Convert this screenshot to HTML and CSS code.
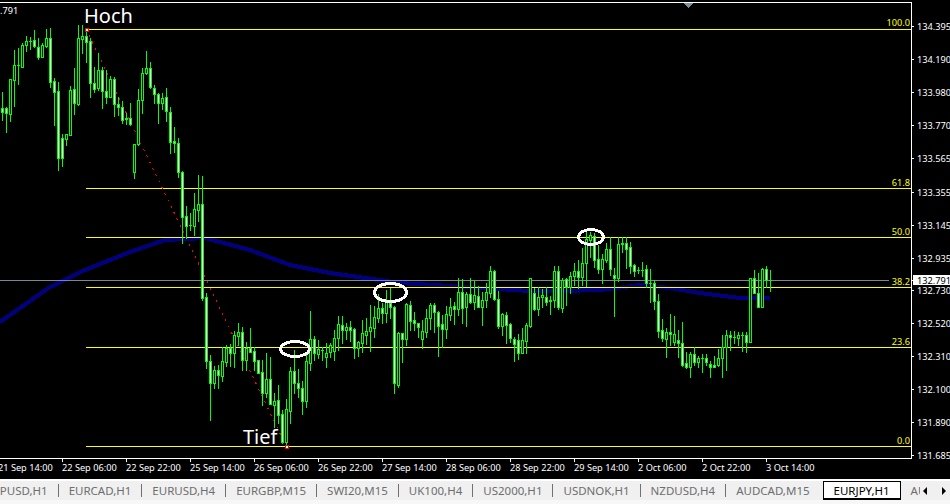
FILE: index.html
```html
<!DOCTYPE html>
<html lang="de">
<head>
<meta charset="utf-8">
<title>EURJPY,H1</title>
<link rel="stylesheet" href="styles.css">
</head>
<body>
<main class="terminal">
  <svg class="chart" viewBox="0 0 950 479" width="950" height="479" aria-label="EURJPY H1 chart">
    <g id="ma"></g>
    <g class="fib-lines">
      <rect x="86" y="29" width="825" height="1"/>
      <rect x="86" y="188" width="825" height="1"/>
      <rect x="86" y="237" width="825" height="1"/>
      <rect x="86" y="287" width="825" height="1"/>
      <rect x="86" y="347" width="825" height="1"/>
      <rect x="86" y="446" width="825" height="1"/>
    </g>
    <rect class="price-line" x="0" y="280" width="911" height="1"/>
    <line class="trend" x1="86" y1="29" x2="286" y2="446"/>
    <g id="candles"></g>
    <g class="anchors">
      <rect x="85" y="28" width="3" height="3"/>
      <rect x="285" y="445" width="3" height="3"/>
    </g>
    <g class="marks">
      <ellipse cx="295" cy="349" rx="14.5" ry="7.5"/>
      <ellipse cx="390.5" cy="292.5" rx="16" ry="9"/>
      <ellipse cx="591" cy="237" rx="12.5" ry="7.5"/>
    </g>
    <g class="frame">
      <rect x="0" y="2" width="912" height="1"/>
      <rect x="0" y="458" width="912" height="1"/>
      <rect x="911" y="2" width="1" height="457"/>
    </g>
    <polygon class="shift" points="684,3 693,3 688.5,8"/>
    <g id="ticks" class="frame"></g>

    <rect class="fib-mask" x="889" y="277" width="22" height="9"/>
    <g class="fib-text">
      <text x="910" y="26">100.0</text>
      <text x="910" y="186">61.8</text>
      <text x="910" y="235">50.0</text>
      <text x="910" y="285">38.2</text>
      <text x="910" y="345">23.6</text>
      <text x="910" y="444">0.0</text>
    </g>

    <text class="axis" x="0" y="14">.791</text>
    <text class="note" x="84" y="23">Hoch</text>
    <text class="note" x="243" y="444">Tief</text>

    <g class="axis" id="prices"></g>
    <rect class="price-box" x="913" y="275" width="37" height="10"/>
    <text class="axis axis-current" x="917" y="284">132.791</text>
    <g class="axis" id="times"></g>
  </svg>

  <nav class="tabbar">
    <div class="tabs">
      <span class="tab tab-first">GBPUSD,H1</span>
      <span class="tab">EURCAD,H1</span>
      <span class="tab">EURUSD,H4</span>
      <span class="tab">EURGBP,M15</span>
      <span class="tab">SWI20,M15</span>
      <span class="tab">UK100,H4</span>
      <span class="tab">US2000,H1</span>
      <span class="tab">USDNOK,H1</span>
      <span class="tab">NZDUSD,H4</span>
      <span class="tab tab-plain">AUDCAD,M15</span>
      <span class="tab tab-active">EURJPY,H1</span>
      <span class="tab tab-plain">AUDJPY,H1</span>
    </div>
    <div class="arrows">
      <svg width="30" height="12" viewBox="0 0 30 12"><path d="M7 2v8L3 6zM22 2v8l4-4z"/></svg>
    </div>
  </nav>
</main>
<script src="chart.js"></script>
</body>
</html>
```
FILE: styles.css
```css
html, body {
  margin: 0;
  padding: 0;
  background: #000;
}
.terminal {
  width: 950px;
  height: 504px;
  display: flex;
  flex-direction: column;
  overflow: hidden;
  background: #000;
}
.chart {
  display: block;
  flex: 0 0 479px;
  shape-rendering: crispEdges;
}
.fib-lines rect { fill: #ffff00; }
.price-line { fill: #778899; }
.trend {
  stroke: #ff0000;
  stroke-width: 1;
  stroke-dasharray: 2 5;
}
.wick, .body { fill: #00ff00; }
.core-bear { fill: #ffffff; }
.core-bull { fill: #000000; }
.ma-line {
  fill: none;
  stroke: #000080;
  stroke-width: 4;
}
.anchors rect {
  fill: #ffffff;
  stroke: #ff0000;
  stroke-width: 1;
}
.marks ellipse {
  fill: none;
  stroke: #ffffff;
  stroke-width: 3;
}
.frame rect { fill: #ffffff; }
.shift { fill: #7890a0; }
.fib-mask { fill: #000; }
.fib-text text {
  font: 9.2px "Noto Sans", sans-serif;
  fill: #ffff00;
  text-anchor: end;
}
.axis, .axis text {
  font: 9.2px "Noto Sans", sans-serif;
  fill: #ffffff;
}
.price-box { fill: #ffffff; }
.axis-current { fill: #000000; }
.note {
  font: 20px "Noto Sans", sans-serif;
  fill: #ffffff;
}
.tabbar {
  flex: 1;
  box-sizing: border-box;
  display: flex;
  align-items: flex-start;
  border-top: 2px solid #ffffff;
  background: linear-gradient(#f0f0f0 0, #f0f0f0 19px, #f7f7f7 19px);
}
.tabs {
  flex: 1;
  min-width: 0;
  display: flex;
  overflow: hidden;
  height: 19px;
  align-items: center;
}
.tab {
  flex: none;
  box-sizing: border-box;
  height: 13px;
  padding: 0 10px;
  border-right: 1px solid #707070;
  font: 11.5px/13px "Noto Sans", sans-serif;
  color: #6e6e6e;
}
.tab-first { margin-left: -26px; }
.tab-plain {
  border-right: 0;
  padding-right: 13px;
}
.tab-active {
  height: 19px;
  line-height: 17px;
  background: #ffffff;
  border: 1px solid #000000;
  border-bottom-width: 2px;
  color: #000000;
}
.arrows {
  flex: 0 0 30px;
  height: 19px;
  display: flex;
  align-items: center;
  background: #f0f0f0;
}
.arrows svg { display: block; }
```
FILE: chart.js
```js
// [high, low, bodyTop, bodyBottom, bear]
var candles = [
[92,120,108,112,1],[107,132,108,113,1],[79,121,79,114,0],[50,106,65,80,0],[48,84,65,65,0],
[43,67,45,67,0],[36,51,41,45,0],[37,49,41,41,0],[30,47,40,46,1],[38,59,47,57,1],
[43,57,45,57,0],[29,47,38,46,0],[28,87,38,82,1],[78,125,81,92,1],[82,170,91,158,1],
[134,166,138,158,1],[134,145,134,139,0],[86,135,90,135,0],[68,114,89,103,1],[25,105,38,104,0],
[25,53,36,39,0],[29,62,36,42,1],[38,97,41,83,1],[67,92,83,89,1],[53,90,70,88,0],
[67,108,70,91,1],[70,103,91,97,1],[76,97,79,97,0],[77,116,79,104,1],[97,115,104,107,1],
[101,123,107,120,1],[113,124,118,119,0],[103,125,118,124,1],[144,178,144,172,0],[89,145,100,144,0],
[68,113,73,100,0],[51,74,68,73,0],[62,88,68,87,1],[85,103,88,94,1],[93,123,94,103,1],
[93,109,98,103,0],[88,121,97,111,1],[107,153,112,142,1],[127,152,141,143,1],[138,177,143,172,1],
[171,243,172,217,1],[206,238,216,226,1],[213,230,225,225,0],[193,235,209,226,0],[175,221,204,210,0],
[176,300,204,298,1],[293,368,297,361,1],[355,420,361,383,1],[366,388,370,383,0],[365,388,370,375,1],
[347,381,361,376,0],[345,366,348,362,0],[344,366,348,353,1],[331,367,335,353,0],[323,345,332,336,0],
[327,370,332,360,1],[342,370,348,360,0],[328,352,348,352,1],[347,370,351,361,1],[360,373,360,373,1],
[360,405,372,393,1],[353,397,379,393,0],[357,404,379,404,1],[393,427,401,405,0],[385,423,400,415,1],
[410,443,414,442,1],[399,447,409,442,0],[367,423,371,411,0],[350,393,371,383,1],[369,397,383,388,1],
[381,414,388,401,1],[353,407,361,401,0],[311,370,339,363,0],[336,360,339,353,1],[340,358,349,354,0],
[347,360,350,350,0],[343,367,353,357,0],[343,357,345,352,0],[330,360,338,351,0],[316,350,324,338,0],
[316,343,325,330,1],[323,339,327,330,0],[321,341,327,330,1],[328,358,329,348,1],[341,356,342,348,0],
[320,352,333,343,0],[318,344,331,335,0],[305,351,327,331,0],[306,337,317,328,0],[294,322,308,318,0],
[303,323,308,313,1],[290,322,301,313,0],[288,318,303,307,1],[306,393,307,383,1],[332,387,333,385,0],
[333,362,333,339,1],[303,345,304,339,0],[301,330,305,321,1],[312,330,320,323,1],[323,337,323,327,1],
[320,348,331,339,0],[309,337,318,332,0],[303,329,305,318,0],[303,332,305,312,1],[311,356,312,326,1],
[315,347,324,329,1],[306,338,314,329,0],[298,320,307,315,0],[302,324,306,309,1],[278,315,292,309,0],
[279,323,292,308,1],[292,326,294,307,0],[278,303,294,302,1],[281,309,295,302,0],[286,307,296,307,1],
[292,325,300,307,0],[283,307,292,300,0],[266,297,271,293,0],[270,300,271,299,1],[291,328,299,326,1],
[313,335,314,326,0],[312,343,315,325,1],[323,342,324,338,1],[337,361,339,344,1],[334,359,340,353,1],
[328,353,340,353,0],[323,353,325,341,0],[278,327,278,326,0],[288,310,293,309,1],[287,315,297,309,0],
[289,307,295,297,0],[287,305,297,302,1],[296,314,300,301,0],[266,307,271,300,0],[266,309,271,307,1],
[278,312,280,308,0],[278,305,279,287,1],[272,293,276,287,0],[263,285,271,276,0],[260,288,271,277,1],
[248,285,263,277,0],[232,286,239,263,0],[232,257,235,240,0],[233,267,236,260,1],[245,273,259,269,1],
[254,283,259,269,0],[243,262,249,260,0],[237,275,249,269,1],[268,316,275,278,1],[237,281,244,278,0],
[237,252,243,244,0],[237,268,243,249,1],[242,273,247,266,1],[264,276,265,271,1],[267,273,270,270,0],
[262,276,270,270,0],[265,287,269,283,1],[269,302,283,283,0],[280,309,283,301,1],[294,337,301,331,1],
[319,341,330,338,1],[328,357,332,339,0],[314,345,332,334,1],[316,345,334,342,0],[330,357,340,343,1],
[322,366,343,365,1],[352,368,363,367,1],[352,377,354,367,0],[347,365,354,362,1],[356,367,358,362,0],
[354,372,358,358,0],[354,365,358,362,1],[361,377,364,367,1],[356,367,365,367,1],[349,366,358,365,0],
[335,377,347,358,0],[330,370,335,347,0],[331,350,335,337,1],[331,343,337,337,0],[332,345,335,338,0],
[332,351,335,335,0],[332,352,335,342,1],[278,342,278,342,0],[270,293,278,293,1],[273,307,293,307,1],
[268,307,269,307,0],[266,287,269,280,1],[270,291,280,280,0]
];

var maPoints = "0,322 20,308 50,287 85,270 130,252 165,240 205,238 250,250 290,265 330,273 400,283 450,286 530,291 560,291 600,290 640,285 670,288 700,293 740,298 770,298";

var priceRows = [
  ["134.395", 26], ["134.190", 59], ["133.980", 92], ["133.770", 125], ["133.565", 158],
  ["133.355", 192], ["133.145", 225], ["132.935", 258], ["132.730", 290], ["132.520", 323],
  ["132.310", 356], ["132.100", 389], ["131.890", 422], ["131.685", 455]
];

var timeRows = [
  "21 Sep 14:00", "22 Sep 06:00", "22 Sep 22:00", "25 Sep 14:00", "26 Sep 06:00",
  "26 Sep 22:00", "27 Sep 14:00", "28 Sep 06:00", "28 Sep 22:00", "29 Sep 14:00",
  "2 Oct 06:00", "2 Oct 22:00", "3 Oct 14:00"
];

function rect(cls, x, y, w, h) {
  return '<rect class="' + cls + '" x="' + x + '" y="' + y + '" width="' + w + '" height="' + h + '"/>';
}

var wicks = "", bodies = "";
candles.forEach(function (c, i) {
  var x = 2 + 4 * i;
  wicks += rect("wick", x, c[0], 1, c[1] - c[0] + 1);
  bodies += rect("body", x - 1, c[2], 3, c[3] - c[2] + 1);
  if (c[3] - c[2] > 1) {
    bodies += rect(c[4] ? "core-bear" : "core-bull", x, c[2] + 1, 1, c[3] - c[2] - 1);
  }
});
document.getElementById("candles").innerHTML = wicks + bodies;
document.getElementById("ma").innerHTML = '<polyline class="ma-line" points="' + maPoints + '"/>';

var ticks = "", prices = "", times = "";
priceRows.forEach(function (r) {
  ticks += rect("tick", 912, r[1], 2, 1);
  prices += '<text x="917" y="' + (r[1] + 4) + '">' + r[0] + "</text>";
});
ticks += rect("tick", 912, 280, 2, 1);
timeRows.forEach(function (t, i) {
  var x = 64 * i - 2;
  if (x > 0) ticks += rect("tick", x, 459, 1, 3);
  times += '<text x="' + x + '" y="471">' + t + "</text>";
});
document.getElementById("ticks").innerHTML = ticks;
document.getElementById("prices").innerHTML = prices;
document.getElementById("times").innerHTML = times;
```
